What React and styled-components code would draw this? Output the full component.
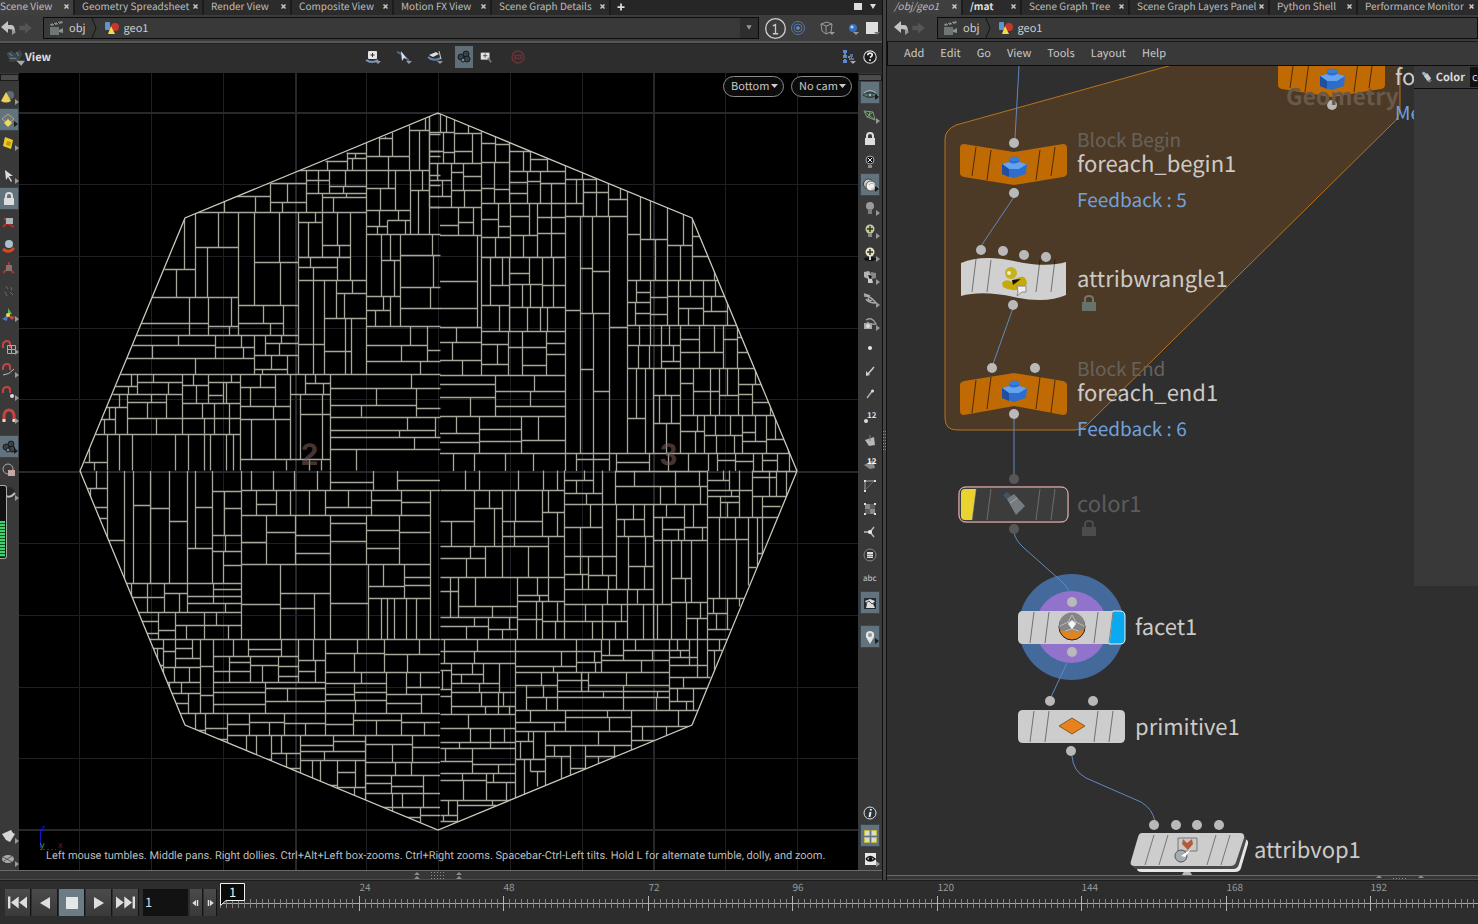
import { Fragment } from 'react';
import styled, { createGlobalStyle } from 'styled-components';

const GlobalStyle = createGlobalStyle`
  * {
    box-sizing: border-box;
  }

  body {
    margin: 0;
    background-color: #2d2d2d;
    color: #c8c8c8;
    font-family: 'Noto Sans CJK SC', 'Noto Sans', sans-serif;
    font-size: 10px;
    text-rendering: geometricPrecision;
    overflow: hidden;
  }

  button,
  input,
  select {
    font: inherit;
    color: inherit;
    margin: 0;
    padding: 0;
    border: 0;
    background: none;
    text-rendering: inherit;
  }
`;

const Desktop = styled.div`
  display: flex;
  flex-direction: column;
  height: 100vh;
`;

const Panes = styled.main`
  display: grid;
  grid-template-columns: 882fr 5px 591fr;
  flex: 1;
  min-height: 0;
`;

const Pane = styled.section`
  display: flex;
  flex-direction: column;
  min-width: 0;
  min-height: 0;
  overflow: hidden;
`;

const TabBar = styled.nav`
  display: flex;
  align-items: center;
  height: 15px;
  background-color: #262626;
  overflow: hidden;
`;

const Tab = styled.div`
  display: flex;
  flex: 0 0 ${({ $width }) => $width}px;
  align-items: center;
  justify-content: space-between;
  height: 15px;
  padding: 0 3px 3px ${({ $first }) => ($first ? 0 : 7)}px;
  border-right: 2px solid #1c1c1c;
  background-color: ${({ $active }) => ($active ? '#3f3f3f' : '#2b2b2b')};
`;

const TabLabel = styled.button`
  line-height: 12px;
  white-space: nowrap;
  font-weight: ${({ $bold }) => ($bold ? 700 : 400)};
  font-style: ${({ $italic }) => ($italic ? 'italic' : 'normal')};
  color: ${({ $bold }) => ($bold ? '#e0e0e0' : '#bdbdbd')};
`;

const TabClose = styled.button`
  display: flex;
  width: 8px;
  height: 12px;
  align-items: center;
  justify-content: center;
`;

const TabAdd = styled.button`
  width: 20px;
  height: 15px;
`;

const TabTools = styled.div`
  display: flex;
  gap: 8px;
  margin-left: auto;
  padding-right: 4px;
`;

const PathBar = styled.div`
  display: flex;
  align-items: center;
  height: 26px;
  padding: 0 ${({ $right }) => $right}px 0 0;
  background-color: #3d3d3d;
`;

const NavArrows = styled.div`
  display: flex;
  width: ${({ $width }) => $width}px;
  padding-left: ${({ $indent }) => $indent}px;
`;

const PathField = styled.div`
  display: flex;
  flex: 1;
  align-items: center;
  height: 22px;
  border: 1px solid #0c0c0c;
  background-color: #393939;
`;

const Crumb = styled.button`
  display: flex;
  align-items: center;
  gap: 4px;
  height: 20px;
  padding: 0 0 1px 5px;
  font-size: 11px;
  color: #cfcfcf;
`;

const PathMenu = styled.button`
  width: 18px;
  height: 20px;
  margin-left: auto;
  background-color: #2d2d2d;
`;

const PathTools = styled.div`
  display: flex;
  align-items: center;
  gap: 1px;
  padding-left: 5px;
`;

const IconButton = styled.button`
  display: flex;
  flex: 0 0 auto;
  align-items: center;
  justify-content: center;
  width: ${({ $width }) => $width || 22}px;
  height: 22px;
  background-color: ${({ $active }) => ($active ? '#5f6f7a' : 'transparent')};
`;

const ViewBar = styled.div`
  display: flex;
  align-items: center;
  height: 32px;
  padding: 0 1px 2px 5px;
  border-top: 2px solid #555;
  box-shadow: inset 0 1px 0 #222;
  background-color: #2d2d2d;
`;

const ViewTitle = styled.h1`
  flex: 12;
  margin: 0;
  font-size: 11px;
  line-height: 16px;
  color: #e0e0e0;
`;

const ViewTools = styled.div`
  display: flex;
  flex: 0 0 auto;
  align-items: center;
  gap: ${({ $gap }) => $gap || 0}px;
`;

const ViewSpacer = styled.div`
  flex: 11;
`;

const Stage = styled.div`
  display: flex;
  flex: 1;
  min-height: 0;
`;

const ToolStrip = styled.aside`
  display: flex;
  position: relative;
  flex: 0 0 ${({ $width }) => $width}px;
  flex-direction: column;
  align-items: ${({ $align }) => $align || 'center'};
  overflow: hidden;
  background-color: #393939;
`;

const StripHandle = styled.div`
  flex: 0 0 ${({ $height }) => $height}px;
  width: 100%;
  margin: 1px 0 ${({ $after }) => $after}px;
  border: 1px solid #1c1c1c;
  background-color: #4b4b4b;
`;

const StripGap = styled.div`
  flex: 0 0 ${({ $size }) => $size}px;
`;

const StripFill = styled.div`
  flex: 1;
`;

const StripButton = styled.button`
  display: flex;
  position: relative;
  flex: 0 0 23px;
  align-items: center;
  justify-content: center;
  width: 20px;
  border: ${({ $active }) => ($active ? '1px solid #3a464d' : 0)};
  background-color: ${({ $active }) => ($active ? '#62737d' : 'transparent')};
`;

const Flyout = styled.i`
  position: absolute;
  right: 0;
  bottom: 3px;
  border: 3px solid transparent;
  border-right: 0;
  border-left: 4px solid ${({ $dark }) => ($dark ? '#1b1b1b' : '#999')};
`;

const Meter = styled.div`
  position: absolute;
  left: 0;
  top: 412px;
  width: 7px;
  height: 74px;
  border: 1px solid #aaa;
  border-left: 0;
  border-radius: 0 3px 3px 0;
  background: repeating-linear-gradient(#45d070 0 2px, #0c5522 2px 3px) 0 35px / 5px 36px
    no-repeat #111;
`;

const Viewport = styled.div`
  position: relative;
  flex: 1;
  min-width: 0;
  background-color: #000;
`;

const ViewportArt = styled.svg`
  display: block;
  width: 100%;
  height: 100%;
`;

const CameraMenus = styled.div`
  display: flex;
  position: absolute;
  top: 3px;
  right: 6px;
  gap: 7px;
`;

const CameraMenu = styled.label`
  display: flex;
  align-items: center;
  justify-content: space-between;
  width: 61px;
  height: 21px;
  padding: 0 5px 1px 7px;
  border: 1px solid #8c8c8c;
  border-radius: 11px;
  background-color: #0c0c0c;
`;

const CameraSelect = styled.select`
  appearance: none;
  width: 40px;
  height: 18px;
  font-size: 11px;
  line-height: 18px;
  color: #c8c8c8;
`;

const HelpText = styled.p`
  position: absolute;
  left: 27px;
  bottom: 5px;
  margin: 0;
  font-family: Roboto, sans-serif;
  font-size: 11px;
  line-height: 18px;
  white-space: nowrap;
  color: #bcbcbc;
`;

const RowSplitter = styled.div`
  display: flex;
  align-items: center;
  justify-content: ${({ $end }) => ($end ? 'flex-end' : 'center')};
  height: ${({ $height }) => $height}px;
  padding-right: ${({ $end }) => $end || 6}px;
  border-top: 1px solid #6a6a6a;
  border-bottom: 1px solid #4c4c4c;
  background-color: #363636;
  overflow: hidden;
`;

const ColumnSplitter = styled.div`
  display: flex;
  align-items: center;
  border-left: 1px solid #101010;
  border-right: 1px solid #101010;
  background-color: #424242;
`;

const MenuBar = styled.nav`
  display: flex;
  align-items: center;
  gap: 16px;
  height: 25px;
  padding: 0 0 1px 16px;
  border-top: 1px solid #161616;
  border-bottom: 1px solid #0c0c0c;
  border-left: 1px solid #0c0c0c;
  background-color: #393939;
`;

const MenuItem = styled.button`
  font-size: 11px;
  line-height: 18px;
  color: #cacaca;
`;

const Network = styled.div`
  position: relative;
  flex: 1;
  min-height: 0;
  overflow: hidden;
  background-color: #2f2f2f;
`;

const Wires = styled.svg`
  position: absolute;
  left: 0;
  top: 0;
`;

const NodeBox = styled.div`
  position: absolute;
  left: ${({ $x }) => $x - 887}px;
  top: ${({ $y }) => $y - 66}px;
`;

const NodeArt = styled.svg`
  display: block;
  overflow: visible;
`;

const NodeLabels = styled.div`
  display: flex;
  position: absolute;
  left: ${({ $left }) => $left || 117}px;
  top: ${({ $top }) => $top}px;
  flex-direction: column;
  white-space: nowrap;
`;

const NodeKind = styled.span`
  font-size: 19px;
  line-height: 22px;
  color: #66625c;
`;

const NodeName = styled.span`
  font-size: 22px;
  line-height: 24px;
  color: ${({ $dim }) => ($dim ? '#5c5c5c' : '#cdcac6')};
`;

const NodeNote = styled.span`
  margin-top: 12px;
  font-size: 19px;
  line-height: 26px;
  color: #73a0da;
`;

const LockMark = styled.svg`
  margin-top: 4px;
`;

const Watermark = styled.div`
  position: absolute;
  left: 399px;
  top: 15px;
  font-size: 23px;
  font-weight: 700;
  line-height: 28px;
  color: #69594a;
`;

const ParmPanel = styled.aside`
  position: absolute;
  top: 0;
  right: 0;
  width: 64px;
  height: 520px;
  background-color: #393939;
`;

const ParmHeader = styled.label`
  display: flex;
  align-items: center;
  gap: 3px;
  height: 23px;
  padding-left: 6px;
  border-bottom: 1px solid #0c0c0c;
  font-size: 11px;
  font-weight: 700;
  color: #dcdcdc;
`;

const ParmInput = styled.input`
  flex: 1;
  width: 8px;
  height: 20px;
  margin-left: 2px;
  padding-left: 2px;
  background-color: #121212;
  font-weight: 400;
`;

const Playbar = styled.footer`
  display: flex;
  height: 44px;
  padding-left: 5px;
  border-top: 1px solid #1c1c1c;
  background-color: #2d2d2d;
`;

const Transport = styled.div`
  display: flex;
  gap: 1px;
  padding: 8px ${({ $after }) => $after}px 0 0;
`;

const PlayButton = styled.button`
  display: flex;
  align-items: center;
  justify-content: center;
  width: ${({ $small }) => ($small ? 13 : 26)}px;
  height: 27px;
  border-right: 1px solid #151515;
  background: ${({ $active }) =>
    $active ? '#6b7c86' : 'linear-gradient(#4b4b4b, #393939)'};
`;

const FrameInput = styled.input`
  width: 45px;
  height: 27px;
  margin: 8px 2px 0 0;
  padding: 0 0 2px 2px;
  background-color: #121212;
  font-size: 13px;
  color: #dcdcdc;
`;

const Ruler = styled.svg`
  flex: 1;
  min-width: 0;
  height: 43px;
`;

// Segments are [x, from, to] and [y, from, to], three units to a screen pixel.
const NORTH_WEST = {
  x: 80,
  y: 100,
  v: `1035 55 92;988 75 212;1017 93 212;1048 50 404;936 97 170;897 113 170;917 108 116;858 128 823;803 158 212;825 160 175;818 176 212;742 182 212;924 170 212;
678 212 337;714 212 242;748 212 280;796 212 260;790 260 280;716 242 280;726 280 337;760 293 337;800 280 293;572 250 337;623 250 307;608 307 337;526 292 337;434 305 337;
924 212 266;946 212 332;991 212 404;1027 212 270;901 266 332;1015 270 404;897 332 378;955 332 360;976 360 404;893 378 404;922 360 404;
313 355 507;345 337 593;415 337 441;474 337 705;290 507 593;381 441 593;522 337 617;599 337 487;601 487 617;654 337 823;329 593 705;386 593 705;455 593 679;449 679 705;
550 617 670;611 617 705;571 670 705;294 705 736;405 705 776;484 705 741;217 736 776;491 741 776;346 776 823;522 705 823;556 705 765;605 705 731;598 731 765;575 765 808;623 765 823;546 808 823;
705 337 368;726 337 472;685 368 472;773 337 436;811 337 540;778 436 472;691 472 503;773 472 540;700 503 540;701 540 823;734 540 823;768 540 656;818 540 580;794 580 656;797 656 823;815 656 823;
903 404 590;930 404 482;944 482 590;960 404 680;1056 404 466;1060 466 562;1052 562 624;911 590 632;931 590 680;887 632 680;990 680 735;1043 680 785;964 735 785;1022 785 823;
155 824 858;171 824 882;221 824 846;308 824 1003;266 846 882;146 858 882;340 824 855;386 824 910;455 824 846;481 824 1110;350 855 910;429 846 910;440 846 910;119 882 922;143 882 1003;215 882 908;260 882 955;203 908 955;228 955 1003;368 910 955;404 910 1003;447 910 1003;373 955 1003;88 922 958;107 922 1003;73 958 1003;
29 1045 1088;82 1003 1110;118 1003 1110;157 1003 1110;286 1003 1110;325 1003 1110;373 1003 1110;391 1003 1110;440 1003 1110;460 1003 1110;43 1088 1110;
541 824 862;585 824 920;512 862 920;632 824 1080;676 824 882;705 824 850;750 824 1110;731 850 882;579 920 957;515 957 1078;585 957 1078;661 882 1078;728 882 1078;
994 824 865;888 865 917;1009 865 950;844 917 950;983 952 990;1065 952 1012;958 990 1012;1003 1012 1049;830 1049 1110;620 1080 1110;687 1080 1110;723 1080 1110`,
  h: `92 988 1048;116 897 936;170 858 988;212 640 1048;160 800 858;175 803 858;184 735 803;242 678 748;260 748 858;280 678 858;293 726 858;250 572 678;307 572 678;290 470 572;337 345 858;
266 858 946;270 991 1048;332 858 991;360 922 991;378 858 922;404 858 1080;103 1048 1080;154 1048 1080;170 1048 1080;226 1048 1080;256 1048 1080;322 1048 1080;
441 345 474;507 252 345;593 215 474;487 522 654;617 474 654;671 185 386;679 386 474;705 170 654;670 474 611;736 157 405;741 405 522;776 138 522;731 556 654;765 522 654;808 522 623;824 120 1080;
368 654 726;436 726 811;472 654 811;503 654 773;540 654 858;580 768 858;656 734 858;755 734 815;733 654 734;466 960 1080;482 903 960;562 960 1080;590 858 960;624 960 1080;632 858 931;680 858 1080;735 858 1043;750 1043 1080;785 858 1080;
846 171 308;855 308 386;846 386 481;858 105 171;882 97 308;887 386 428;910 308 481;908 143 260;922 78 143;955 143 481;958 65 107;1003 45 481;1088 12 82;
862 481 585;920 481 632;957 481 632;850 676 750;882 632 750;944 661 750;1079 481 750;865 750 1080;917 750 1009;924 1009 1080;952 750 1080;990 750 1065;1012 750 1080;1049 750 1080`,
};

const SOUTH_EAST = {
  x: 440,
  y: 470,
  v: `75 0 62;118 0 62;235 0 62;311 0 62;352 0 62;102 62 228;148 62 116;187 62 322;227 62 155;326 62 127;306 62 199;33 155 228;163 116 228;352 127 199;223 155 230;90 230 265;136 230 322;78 265 322;265 230 322;324 199 395;
31 322 443;54 322 443;106 322 409;156 409 443;232 322 507;292 322 375;297 375 395;290 395 507;308 395 507;352 397 455;345 455 507;373 0 507;102 443 470;145 443 507;207 443 477;78 470 507;186 477 507;
433 0 32;460 0 70;410 32 70;488 0 260;440 70 102;527 0 102;583 0 50;707 0 102;779 0 50;660 50 102;780 50 102;803 0 622;
451 102 172;420 172 260;529 102 358;579 102 148;614 102 199;552 148 199;641 102 507;564 199 358;616 199 290;614 290 358;422 260 312;487 260 316;427 312 358;445 260 358;505 316 358;
680 102 140;733 102 210;759 102 172;667 140 210;715 178 210;787 172 210;501 358 404;561 358 507;591 358 401;437 404 455;487 404 507;544 404 455;458 455 507;525 455 507;610 404 507;
667 210 404;695 210 507;725 210 325;754 210 397;737 325 397;653 404 507;739 397 507;782 397 445;772 445 507;
851 0 30;868 0 62;898 0 142;875 62 80;842 80 142;863 97 142;938 0 142;988 0 22;1010 0 80;989 22 80;968 80 142;1040 0 80;
838 142 385;886 142 207;889 207 385;926 142 345;951 142 293;968 142 250;820 385 430;861 385 478;830 430 478;897 385 410;838 507 540;822 540 600;
14 507 580;112 507 543;104 543 580;227 507 985;33 580 733;98 580 612;130 580 640;177 580 667;63 612 640;118 640 667;124 667 710;175 667 733;191 667 707;137 710 733;207 707 733;8 600 658;
86 733 775;91 775 818;151 775 834;194 775 818;59 818 834;15 834 875;98 834 910;175 883 910;67 910 930;139 910 990;160 910 937;71 930 990;198 937 990;25 990 1035;53 990 1055;158 990 1005;10 1035 1055;
409 507 608;363 545 590;341 590 608;484 507 608;508 507 555;549 507 572;463 545 577;467 577 608;585 507 541;637 541 572;605 572 608;689 507 720;711 507 540;747 507 585;720 540 562;772 507 622;
303 608 645;352 608 720;423 608 665;445 608 665;558 608 647;310 645 683;259 645 720;320 683 720;549 647 720;490 667 683;652 665 683;650 683 720;729 622 652;760 655 720;711 655 693;740 693 720;
271 720 757;377 720 785;343 757 785;501 720 743;507 743 785;574 720 840;715 720 770;606 770 810;680 770 795;474 785 823;242 813 865;265 785 813;281 785 867;317 785 945;343 825 860;390 825 915;437 825 895;363 860 925;253 867 975;271 867 905;293 905 950;523 825 860;476 860 880`,
  h: `62 0 373;116 102 187;127 306 373;155 0 102;155 187 306;199 187 373;230 0 325;265 0 136;322 0 373;365 0 54;409 54 232;443 0 232;375 232 325;395 232 373;448 232 308;455 308 373;470 0 145;477 145 232;507 0 862;
32 373 460;70 373 488;102 373 803;50 527 803;4 527 803;172 373 488;148 529 614;199 529 641;290 564 641;260 373 529;312 373 445;316 445 529;358 373 641;142 641 733;178 667 733;172 733 803;210 641 803;404 373 694;455 373 561;325 695 754;397 695 803;445 739 803;
30 803 868;62 803 938;80 803 898;97 842 898;4 938 1070;22 938 1010;80 938 1040;110 968 1020;142 803 1015;207 838 926;385 803 912;293 926 950;430 803 861;478 803 870;250 951 968;540 803 848;
543 0 227;580 0 227;600 0 33;612 33 130;640 33 177;667 33 227;658 0 33;680 0 33;710 33 227;733 0 227;775 0 227;818 0 227;834 0 227;875 0 98;883 98 227;910 0 227;930 0 139;937 139 227;990 0 215;1005 53 170;1035 0 53;1055 0 53;
545 227 484;590 227 409;577 409 484;555 484 549;541 549 689;572 484 689;608 227 689;541 689 747;562 689 772;585 689 803;622 689 810;645 227 352;632 352 445;647 445 689;665 352 689;683 259 689;655 689 803;693 689 760;720 227 775;
757 227 377;743 377 574;785 227 574;770 574 745;810 574 640;825 317 574;813 227 281;867 227 317;905 271 317;860 317 390;895 390 437;860 437 530`,
};

const CENTER_X = 440;
const CENTER_Y = 471;

// Blocks of the remaining quadrants: [left, top, right, bottom, lean, cell size].
// A lean above 1 gives wide cells, below 1 tall ones.
const BLOCKS = [
  [429, 113, 454, 163, 0.6, 14],
  [454, 113, 481, 163, 0.8, 15],
  [429, 163, 481, 207, 1, 14],
  [440, 207, 481, 235, 0.7, 16],
  [481, 125, 509, 203, 0.5, 18],
  [509, 140, 565, 203, 0.9, 15],
  [481, 203, 537, 257, 0.8, 16],
  [537, 203, 565, 257, 0.7, 16],
  [440, 235, 477, 281, 1, 34],
  [440, 281, 477, 327, 1, 26],
  [477, 235, 481, 327, 0.5, 30],
  [481, 257, 509, 331, 0.5, 18],
  [509, 257, 565, 331, 0.8, 17],
  [440, 327, 481, 375, 1.6, 19],
  [481, 331, 565, 375, 0.9, 17],
  [565, 160, 596, 216, 0.7, 16],
  [596, 175, 627, 216, 0.7, 15],
  [565, 216, 580, 453, 0.12, 44],
  [580, 216, 609, 313, 0.25, 26],
  [580, 313, 609, 453, 0.2, 32],
  [609, 216, 627, 453, 0.1, 42],
  [627, 188, 640, 280, 0.3, 24],
  [640, 195, 667, 280, 0.4, 24],
  [667, 203, 692, 280, 0.4, 24],
  [627, 280, 667, 325, 0.8, 14],
  [667, 280, 727, 325, 1.2, 15],
  [692, 216, 727, 280, 0.6, 20],
  [627, 325, 680, 368, 0.9, 14],
  [680, 325, 765, 368, 0.8, 18],
  [627, 368, 653, 453, 0.3, 22],
  [653, 368, 680, 453, 0.5, 17],
  [680, 368, 719, 415, 0.8, 19],
  [719, 368, 770, 415, 0.7, 17],
  [680, 415, 742, 453, 1, 16],
  [742, 415, 800, 453, 0.7, 15],
  [440, 375, 565, 416, 2.8, 24],
  [440, 416, 479, 453, 2, 18],
  [479, 416, 565, 453, 1.8, 21],
  [440, 453, 565, 471, 1, 20],
  [565, 453, 616, 471, 1, 12],
  [616, 453, 708, 471, 2, 17],
  [708, 453, 800, 471, 1, 13],
  [80, 471, 107, 548, 0.6, 15],
  [107, 471, 133, 583, 0.2, 28],
  [133, 471, 187, 583, 0.2, 34],
  [187, 471, 212, 583, 0.25, 26],
  [212, 471, 241, 535, 0.6, 20],
  [212, 535, 241, 583, 0.7, 16],
  [241, 471, 330, 490, 1, 18],
  [330, 471, 440, 490, 2.4, 22],
  [241, 490, 325, 515, 1, 18],
  [325, 490, 430, 515, 2, 19],
  [241, 515, 295, 564, 0.9, 26],
  [295, 515, 366, 564, 1.4, 24],
  [366, 515, 430, 564, 1, 26],
  [241, 564, 280, 639, 0.9, 34],
  [280, 564, 368, 639, 1, 32],
  [368, 564, 430, 598, 1.4, 19],
  [368, 598, 430, 639, 0.4, 20],
  [430, 490, 440, 639, 0.8, 36],
  [120, 583, 187, 612, 0.9, 14],
  [187, 583, 241, 612, 2, 16],
  [120, 612, 241, 639, 1.6, 16],
  [145, 639, 200, 682, 1, 14],
  [200, 639, 213, 713, 0.6, 17],
  [150, 682, 200, 713, 1.4, 14],
  [213, 639, 298, 656, 2, 16],
  [213, 656, 298, 682, 1.4, 14],
  [213, 682, 325, 713, 3.2, 22],
  [298, 639, 325, 682, 0.8, 15],
  [325, 639, 440, 672, 2.4, 20],
  [325, 672, 440, 713, 2.2, 18],
  [180, 713, 227, 760, 1, 15],
  [227, 713, 325, 735, 2.2, 17],
  [227, 735, 300, 790, 0.6, 18],
  [300, 735, 365, 760, 2.8, 17],
  [325, 713, 440, 735, 2.2, 17],
  [365, 735, 440, 775, 2.6, 19],
  [300, 760, 365, 810, 0.7, 17],
  [365, 775, 440, 830, 1.8, 16],
];

const createRandom = (seed) => {
  let state = seed;
  return () => {
    state = (state * 16807) % 2147483647;
    return state / 2147483647;
  };
};

const subdivide = (left, top, right, bottom, lean, size, random) => {
  const width = right - left;
  const height = bottom - top;
  const ratio = 0.3 + random() * 0.4;
  if (width * height < size * size * 1.5 || Math.max(width, height) < 10) return '';
  if (width > height * lean) {
    const x = Math.round(left + width * ratio);
    return (
      `M${x}.5 ${top}V${bottom}` +
      subdivide(left, top, x, bottom, lean, size, random) +
      subdivide(x, top, right, bottom, lean, size, random)
    );
  }
  const y = Math.round(top + height * ratio);
  return (
    `M${left} ${y}.5H${right}` +
    subdivide(left, top, right, y, lean, size, random) +
    subdivide(left, y, right, bottom, lean, size, random)
  );
};

// Cells run on across the two centre lines, so no edge is drawn there.
const blockEdges = (left, top, right, bottom) => {
  const columns = [left, right].filter((x) => x !== CENTER_X);
  const rows = [top, bottom].filter((y) => y !== CENTER_Y);
  return (
    columns.map((x) => `M${x}.5 ${top}V${bottom}`).join('') +
    rows.map((y) => `M${left} ${y}.5H${right}`).join('')
  );
};

const blockPath = BLOCKS.map(([left, top, right, bottom, lean, size], i) => {
  const random = createRandom(7919 * (i + 3));
  return (
    blockEdges(left, top, right, bottom) +
    subdivide(left, top, right, bottom, lean, size, random)
  );
}).join('');

const readSegments = (text) =>
  text.split(';').map((part) => part.trim().split(' ').map(Number));

const px = (origin, value) => origin + Math.floor(value / 3) + 0.5;

const quadPath = ({ x, y, v, h }) => {
  const down = readSegments(v).map(
    ([at, from, to]) => `M${px(x, at)} ${px(y, from)}V${px(y, to)}`
  );
  const across = readSegments(h).map(
    ([at, from, to]) => `M${px(x, from)} ${px(y, at)}H${px(x, to)}`
  );
  return down.concat(across).join('');
};

const OCTAGON = '438,113 692,218 797,471 692,725 438,830 185,725 80,471 185,218';
const GRID_X = [79, 151, 223, 295, 366, 438, 510, 582, 653, 725, 797];
const GRID_Y = [112, 184, 256, 328, 399, 471, 543, 615, 687, 758, 829];

const MeshView = () => (
  <ViewportArt viewBox="19 73 839 797" preserveAspectRatio="xMidYMid slice">
    <defs>
      <clipPath id="outline">
        <polygon points={OCTAGON} />
      </clipPath>
    </defs>
    {GRID_X.map((x, i) => (
      <rect
        key={x}
        x={x}
        y="0"
        width={i % 5 === 3 ? 2 : 1}
        height="1000"
        fill={i % 5 === 3 ? '#28282c' : '#202024'}
      />
    ))}
    {GRID_Y.map((y, i) => (
      <rect
        key={y}
        x="0"
        y={y}
        width="1000"
        height={i % 5 === 0 ? 2 : 1}
        fill={i % 5 === 0 ? '#28282c' : '#202024'}
      />
    ))}
    <g clipPath="url(#outline)" stroke="#a6a69a" strokeWidth="1.300" fill="none">
      <path d={quadPath(NORTH_WEST)} />
      <path d={quadPath(SOUTH_EAST)} />
      <path d={blockPath} />
    </g>
    <polygon points={OCTAGON} fill="none" stroke="#c9c9bb" strokeWidth="1.300" />
    <g fill="#80605a" opacity="0.55" fontFamily="Liberation Sans" fontWeight="700" fontSize="31">
      <text x="301" y="465">2</text>
      <text x="660" y="465">3</text>
    </g>
    <g fontFamily="Liberation Sans" fontSize="9">
      <path d="M40.500 830V848" stroke="#1515c8" />
      <path d="M43 849.500H56" stroke="#8c1010" strokeDasharray="2 2" />
      <text x="41" y="831" fill="#1818d0">z</text>
      <text x="40" y="848" fill="#30b030">y</text>
      <text x="58" y="848" fill="#8c1010">x</text>
    </g>
  </ViewportArt>
);

const icons = {
  back: (
    <>
      <path d="M1 8 8 2v4h4q3 1 3 7-2-3-7-3v4z" fill="#c4c4c4" />
      <path d="M12 10v6l4-3z" fill="#999" />
    </>
  ),
  forward: <path d="M14 8 8 3v3H3v4h5v3z" fill="#555" />,
  obj: (
    <>
      <path d="m1 4 12-3 1 2L2 6z" fill="#858b88" />
      <path d="m4 3 2 2M8 2l2 2" stroke="#222" />
      <path d="M1 7h9v8H1z" fill="#6f7774" />
      <path d="m10 10 4-2v5l-4-1z" fill="#8b9390" />
    </>
  ),
  geo: (
    <>
      <rect x="1" y="2" width="5" height="8" rx="1" fill="#5f94cf" />
      <circle cx="11" cy="7" r="4" fill="#c8372c" />
      <path d="m7 6 4 8H4z" fill="#f2dc4b" />
    </>
  ),
  one: (
    <>
      <circle cx="8" cy="8" r="7.500" fill="none" stroke="#cfcfcf" />
      <path d="M6 6l2-1v7M6 12h4" fill="none" stroke="#ccc" />
    </>
  ),
  target: (
    <g fill="none" stroke="#5377ad">
      <circle cx="8" cy="8" r="6.500" />
      <circle cx="8" cy="8" r="4" />
      <circle cx="8" cy="8" r="1.500" fill="#7d9cca" />
    </g>
  ),
  cube: (
    <>
      <path d="m2 4 6-2 5 2-1 8-5 2-4-3zM2 4l5 2 6-2M7 6v8" fill="none" stroke="#999" />
      <path d="M10 12h6l-3 3z" fill="#999" />
    </>
  ),
  sphere: (
    <>
      <circle cx="8" cy="8" r="4" fill="#386fc0" />
      <circle cx="7" cy="7" r="1.500" fill="#b9d2f3" />
      <path d="M8 12h6l-3 3z" fill="#999" />
    </>
  ),
  square: (
    <>
      <path d="M2 2h12v12H2z" fill="#dedede" />
      <path d="M10 12h6l-3 3z" fill="#777" />
    </>
  ),
  camera: (
    <>
      <path d="m1 5 4-2 3 2 4-3 2 4-3 5-7 1z" fill="#3b464c" />
      <path d="m3 5 3 2m3-3 2 3M4 9h5" stroke="#6c7b83" />
      <path d="M9 11h7l-3 4z" fill="#aaa" />
    </>
  ),
  pose: (
    <>
      <rect x="3" y="2" width="9" height="8" rx="1" fill="#e5e5e5" />
      <path d="M7.500 4v4M5.500 6h4" stroke="#333" />
      <path d="M1 11q6 4 12 0" fill="none" stroke="#7795be" strokeWidth="2" />
      <path d="M10 12h6l-3 3z" fill="#999" />
    </>
  ),
  select: (
    <>
      <path d="M1 3q5 1 12 9" fill="none" stroke="#416a9c" strokeWidth="2" />
      <path d="m5 2 1 10 2-3 3 1z" fill="#ddd" />
      <path d="M10 12h6l-3 3z" fill="#999" />
    </>
  ),
  brush: (
    <>
      <path d="m2 6 7-3 3 2-6 3z" fill="#ddd" />
      <path d="M1 8q5 5 13 1" fill="none" stroke="#5f84b4" strokeWidth="2" />
      <path d="m12 2 2 8" stroke="#ccc" />
      <path d="M10 12h6l-3 3z" fill="#999" />
    </>
  ),
  rocks: (
    <g fill="#394347" stroke="#151b1e">
      <circle cx="5" cy="8" r="3" />
      <circle cx="10" cy="5" r="3" />
      <circle cx="11" cy="10" r="3" />
      <circle cx="7" cy="11" r="2" fill="#78868d" />
    </g>
  ),
  zoomBox: (
    <>
      <path d="M2 3h10v8H2z" fill="#e2e2e2" />
      <path d="M7 4v5M4.500 6.500h5" stroke="#36506d" />
      <path d="m10 9 4 5" stroke="#777" strokeWidth="2" />
    </>
  ),
  blocked: (
    <g fill="none" stroke="#6b3335" strokeWidth="1.500">
      <circle cx="8" cy="8" r="6" />
      <path d="M5 6.500h6v3H5z" />
    </g>
  ),
  graph: (
    <>
      <path d="M5 4v9M5 8h7" stroke="#ddd" strokeDasharray="2 1" />
      <path d="M3 1h4v3H3zM3 6h4v3H3zM3 11h4v3H3z" fill="#5d88d1" />
      <path d="M10 5h3v3h-3zM9 9h5v2H9z" fill="#5c6f94" />
      <path d="M10 12h6l-3 3z" fill="#aaa" />
    </>
  ),
  help: (
    <>
      <circle cx="8" cy="8" r="5.500" fill="#1b1b1b" stroke="#d8d8d8" />
      <path d="M6 6.500q0-2 2-2t2 1.700q0 1-2 2.300M8 10v1.500" fill="none" stroke="#eee" strokeWidth="1.500" />
    </>
  ),
  plane: (
    <>
      <path d="M1 10q7-6 14 0-7 5-14 0zM4 8l8 4M12 8l-8 4" fill="none" stroke="#263f38" />
      <path d="M2 8q6-5 12 0" fill="none" stroke="#a9b6b4" />
      <circle cx="8" cy="10" r="2" fill="#9fb0aa" stroke="#263f38" />
    </>
  ),
  leaf: (
    <path d="m2 3 9 1 2 8-8-3zM2 3l11 9M5 9l6-5M8 3l-1 7" fill="none" stroke="#76a070" />
  ),
  lock: (
    <>
      <path d="M5 8V5q0-3 3-3t3 3v3" fill="none" stroke="#ddd" strokeWidth="2" />
      <path d="M3 7h10v7H3z" fill="#ddd" />
    </>
  ),
  bulbOff: (
    <>
      <circle cx="8" cy="6" r="4" fill="#111" stroke="#aaa" />
      <path d="m6 4 4 4m0-4L6 8" stroke="#eee" />
      <path d="M6 11h4v3H6z" fill="#888" />
    </>
  ),
  ball: (
    <>
      <circle cx="6.500" cy="7" r="5" fill="#ccc" stroke="#333" />
      <circle cx="9" cy="9" r="5" fill="#f0f0f0" stroke="#555" />
      <path d="M7 8a3 3 0 1 1 2 4" fill="none" stroke="#aaa" />
    </>
  ),
  bulb: (
    <>
      <circle cx="8" cy="6" r="4" fill="#9b9b9b" />
      <path d="M6 9h4v5H6z" fill="#7d7d7d" />
    </>
  ),
  bulbAdd: (
    <>
      <circle cx="8" cy="6" r="4.500" fill="#c3ca9c" />
      <path d="M8 3v6M5 6h6" stroke="#2d3820" strokeWidth="1.500" />
      <path d="M6 10h4v4H6z" fill="#888" />
    </>
  ),
  bulbGround: (
    <>
      <ellipse cx="8" cy="13" rx="6" ry="2" fill="#111" />
      <circle cx="8" cy="6" r="4.500" fill="#e7e5bd" />
      <path d="M8 3v6M5 6h6" stroke="#333" strokeWidth="1.500" />
      <path d="M7 10h2v4H7z" fill="#ccc" />
    </>
  ),
  shapes: (
    <>
      <path d="m2 3 5-1 2 4-3 4-4-2z" fill="#b3b3b3" />
      <path d="m9 3 5 1v5l-4 1-2-4z" fill="#888" />
      <path d="m6 9 4 1 1 4H6z" fill="#ccc" />
      <path d="m6 6 4 1-2 3z" fill="#111" />
    </>
  ),
  eyeHalf: (
    <path d="M2 4q6-1 12 7-8 0-10-4M6 6q1 4 4 2M2 2l6 2" fill="none" stroke="#aaa" strokeWidth="1.500" />
  ),
  camEye: (
    <>
      <path d="M2 8h8v6H2z" fill="#aaa" />
      <path d="M4 5q6-4 10 4-6 1-9-2" fill="none" stroke="#999" strokeWidth="1.500" />
      <circle cx="6" cy="11" r="2" fill="#ddd" />
    </>
  ),
  dot: <circle cx="8" cy="8" r="2" fill="#e8e8e8" />,
  arrowIn: (
    <>
      <path d="m12 4-6 7" stroke="#ccc" strokeWidth="1.500" />
      <path d="m4 8 4 4-4 1z" fill="#ccc" />
    </>
  ),
  arrowOut: (
    <>
      <path d="m5 12 6-8" stroke="#aaa" strokeWidth="1.500" />
      <circle cx="10.500" cy="5" r="1.500" fill="#ddd" />
    </>
  ),
  pointNum: (
    <>
      <circle cx="4" cy="12" r="2" fill="#ddd" />
      <text x="5" y="9" fontSize="8" fontWeight="700" fill="#ddd">12</text>
    </>
  ),
  prim: (
    <>
      <path d="m3 8 9-3 1 8-6 1z" fill="#b8b8b8" />
      <path d="M8 3v6" stroke="#777" />
    </>
  ),
  primNum: (
    <>
      <path d="m2 10 9-5 2 8-5 1z" fill="#8a8a8a" />
      <text x="5" y="9" fontSize="8" fontWeight="700" fill="#fff">12</text>
    </>
  ),
  corner: (
    <>
      <path d="M3 13V3h10" fill="none" stroke="#aaa" />
      <path d="m3 12 8-8" stroke="#666" />
      <path d="M2 2h2v2H2zM12 2h2v2h-2zM2 12h2v2H2z" fill="#ddd" />
    </>
  ),
  checker: (
    <>
      <path d="M3 3h5v5H3zM8 8h5v5H8z" fill="#888" />
      <path d="M8 3h5v5H8zM3 8h5v5H3z" fill="#5c5c5c" />
      <path d="M2 2h2v2H2zM12 2h2v2h-2zM2 12h2v2H2zM12 12h2v2h-2z" fill="#ddd" />
    </>
  ),
  tripod: (
    <>
      <path d="M2 8h6l4-5M8 8l4 5" fill="none" stroke="#bbb" strokeWidth="1.500" />
      <circle cx="8" cy="8" r="2" fill="#eee" />
    </>
  ),
  page: (
    <>
      <circle cx="8" cy="8" r="6" fill="#333" stroke="#888" />
      <path d="M5 5h6v6H5z" fill="#ddd" />
      <path d="M5 7.500h6M5 9.500h6" stroke="#888" />
    </>
  ),
  abc: <text x="1" y="11" fontSize="8" fill="#ccc">abc</text>,
  image: (
    <>
      <path d="M2 3h12v11H2z" fill="#222b30" />
      <path d="m3 6 5-2 5 2-2 3 2 4H4l1-4z" fill="#ddd" />
      <path d="m4 8 3-2 3 3 3-2" fill="none" stroke="#445" />
    </>
  ),
  pin: (
    <>
      <path d="M8 15 4 8q-1-6 4-6t4 6z" fill="#e4e4e4" />
      <circle cx="8" cy="6" r="2" fill="#8a979d" />
    </>
  ),
  info: (
    <>
      <circle cx="8" cy="8" r="6" fill="#28333b" stroke="#ddd" />
      <path d="m9 4-.3 1.500M8.500 7l-1 5" stroke="#eee" strokeWidth="2" />
    </>
  ),
  quad: (
    <g fill="#d9dccb" stroke="#c9b73b">
      <path d="M2.500 2.500h5v5h-5zM9.500 2.500h5v5h-5zM2.500 9.500h5v5h-5zM9.500 9.500h5v5h-5z" />
    </g>
  ),
  eye: (
    <>
      <path d="M3 2h11v12H3z" fill="#e8e8e8" />
      <path d="M4 8q4-5 9 0-5 4-9 0" fill="#fff" stroke="#111" strokeWidth="1.500" />
      <circle cx="8.500" cy="8" r="2" fill="#111" />
    </>
  ),
  cone: (
    <>
      <circle cx="9" cy="6" r="4" fill="#626b73" />
      <path d="m5 3 5 9q-5 3-10 0z" fill="#ebd35a" />
    </>
  ),
  diamond: (
    <>
      <path d="m7 2 6 5-6 5-6-5z" fill="#6d7578" stroke="#b6ab77" />
      <path d="m7 7 4 4-4 4-4-4z" fill="#f0d867" />
    </>
  ),
  box: (
    <>
      <path d="m4 2 8 3-2 9-8-3z" fill="#edcd22" />
      <path d="m6 6 4 1-1 4-4-1z" fill="#b99714" />
    </>
  ),
  arrow: <path d="m4 2 1 10 2-3 3 5 1-1-3-5h4z" fill="#ddd" />,
  move: (
    <>
      <path d="m2 13 4-4 7 4M3 4l4 4" stroke="#b82f28" strokeWidth="2" fill="none" />
      <path d="M5 4h7v6H5z" fill="#a7b6b7" />
    </>
  ),
  rotate: (
    <>
      <path d="M2 12q6 5 11-1" fill="none" stroke="#d6471d" strokeWidth="3" />
      <circle cx="8" cy="7" r="4" fill="#aebfcb" />
    </>
  ),
  scale: (
    <>
      <path d="m2 13 5-5 6 5M8 8V2" fill="none" stroke="#a83632" strokeWidth="2" />
      <path d="M5 5h6v6H5z" fill="#85706e" />
    </>
  ),
  faded: <path d="m5 3 2 3m3-2 1 3M4 9l2 4m3-4 3 3" stroke="#696969" />,
  handles: (
    <>
      <path d="M7 9V2l4 6z" fill="#57ba45" />
      <path d="m6 9 8 2-3 3z" fill="#d5483b" />
      <path d="m7 9-6 4 5 2z" fill="#4a7bc7" />
      <circle cx="7" cy="9" r="2" fill="#ecd75b" />
    </>
  ),
  magnet: (
    <>
      <path d="M3 13V7q1-5 5-5t5 5v6" fill="none" stroke="#c94440" strokeWidth="3" />
      <path d="M1.500 11h3v3h-3zM11.500 11h3v3h-3z" fill="#ddd" />
    </>
  ),
  magnetGrid: (
    <>
      <path d="M2 9V5q1-3 4-3t3 3v4" fill="none" stroke="#c94440" strokeWidth="2" />
      <path d="M6.500 6.500h8v8h-8zM10.500 6v8M6 10.500h8" fill="none" stroke="#aaa" />
    </>
  ),
  magnetCurve: (
    <>
      <path d="M2 8V5q1-3 4-3t3 3v3" fill="none" stroke="#c94440" strokeWidth="2" />
      <path d="M2 13q6 0 11-6" fill="none" stroke="#bbb" />
    </>
  ),
  magnetPoint: (
    <>
      <path d="M2 8V5q1-3 4-3t3 3v3" fill="none" stroke="#c94440" strokeWidth="2" />
      <circle cx="11" cy="11" r="2" fill="#ddd" />
    </>
  ),
  circleBox: (
    <>
      <circle cx="7" cy="7" r="5" fill="none" stroke="#aaa" />
      <path d="M7 8h7v6H7z" fill="#c6a9a2" />
    </>
  ),
  dial: (
    <>
      <circle cx="8" cy="8" r="6" fill="#24282a" />
      <path d="M2 9q6 6 12-1" fill="none" stroke="#bbb" strokeWidth="2" />
    </>
  ),
  glove: <path d="m1 6 9-4 2 3 2 1-5 8-4-2z" fill="#d6d6d6" />,
  meshBall: (
    <>
      <ellipse cx="7" cy="8" rx="6" ry="4" fill="#aaa" />
      <path d="m2 6 9 5m0-6-8 5" stroke="#555" />
    </>
  ),
  tube: (
    <>
      <path d="m2 3 3-2 4 4-3 3z" fill="#8fb2cf" />
      <path d="m5 7 4-4 5 7-4 4z" fill="#c4c9cc" />
      <path d="M9 12h6l-3 3z" fill="#888" />
    </>
  ),
  caret: <path d="M5 6h6l-3 5z" fill="#999" />,
  plus: <path d="M8 4v8M4 8h8" stroke="#ddd" strokeWidth="2" />,
  toStart: <path d="M0 3h2v10H0zM9 3v10L2.500 8zM16 3v10L9.500 8z" fill="#dedede" />,
  playBack: <path d="M13 2v12L3 8z" fill="#dedede" />,
  stop: <path d="M2 2h12v12H2z" fill="#e6e6e6" />,
  play: <path d="M3 2v12l10-6z" fill="#dedede" />,
  toEnd: <path d="M14 3h2v10h-2zM7 3v10l6.500-5zM0 3v10l6.500-5z" fill="#dedede" />,
  stepBack: <path d="M8 4v8L3 8zM9 4h2v8H9z" fill="#dedede" />,
  stepNext: <path d="M8 4v8l5-4zM5 4h2v8H5z" fill="#dedede" />,
};

const Icon = ({ name, size = 16 }) => (
  <svg width={size} height={size} viewBox="0 0 16 16" aria-hidden="true">
    {icons[name]}
  </svg>
);

const LEFT_TOOLS = [
  ['cone', 'f'], ['diamond', 'fa'], ['box', 'f'], 10,
  ['arrow', 'f'], ['lock', 'a'], ['move'], ['rotate'], ['scale'], ['faded'], ['handles', 'f'], 10,
  ['magnetGrid', 'f'], ['magnetCurve', 'f'], ['magnetPoint', 'f'], ['magnet', 'f'], 8,
  ['rocks', 'fa'], ['circleBox'], ['dial', 'f'], 'fill',
  ['glove', 'f'], ['meshBall', 'f'],
];

const RIGHT_TOOLS = [
  ['plane', 'fa'], ['leaf', 'f'], ['lock'], ['bulbOff'], ['ball', 'fa'], ['bulb', 'f'],
  ['bulbAdd', 'f'], ['bulbGround', 'f'], ['shapes', 'f'], ['eyeHalf', 'f'], ['camEye', 'f'], 2,
  ['dot'], ['arrowIn'], ['arrowOut'], ['pointNum'], ['prim'], ['primNum'], ['corner'],
  ['checker'], ['tripod'], ['page'], ['abc'], 2, ['image', 'a'], 11, ['pin', 'fa'], 'fill',
  ['info'], ['quad', 'a'], ['eye', 'f'],
];

const renderTools = (tools) =>
  tools.map((tool, i) => {
    if (tool === 'fill') return <StripFill key={i} />;
    if (typeof tool === 'number') return <StripGap key={i} $size={tool} />;
    const [name, flags = ''] = tool;
    const active = flags.includes('a');
    return (
      <StripButton key={i} $active={active} aria-label={name}>
        <Icon name={name} />
        {flags.includes('f') && <Flyout $dark={active} />}
      </StripButton>
    );
  });

const LEFT_TABS = [
  { label: 'Scene View', width: 75, active: true, first: true },
  { label: 'Geometry Spreadsheet', width: 129 },
  { label: 'Render View', width: 88 },
  { label: 'Composite View', width: 102 },
  { label: 'Motion FX View', width: 98 },
  { label: 'Scene Graph Details', width: 119 },
];

const RIGHT_TABS = [
  { label: '/obj/geo1', width: 76, active: true, italic: true },
  { label: '/mat', width: 59, bold: true },
  { label: 'Scene Graph Tree', width: 108 },
  { label: 'Scene Graph Layers Panel', width: 140 },
  { label: 'Python Shell', width: 88 },
  { label: 'Performance Monitor', width: 122 },
];

const renderTabs = (tabs) =>
  tabs.map(({ label, width, active, first, bold, italic }) => (
    <Tab key={label} $width={width} $active={active} $first={first}>
      <TabLabel $bold={bold} $italic={italic}>
        {label}
      </TabLabel>
      <TabClose aria-label={`Close ${label}`}>
        <svg width="5" height="5" viewBox="0 0 5 5">
          <path d="m0.500 0.500 4 4m0-4-4 4" stroke="#c8c8c8" strokeWidth="1.500" />
        </svg>
      </TabClose>
    </Tab>
  ));

const Crumbs = () => (
  <>
    <Crumb>
      <Icon name="obj" />
      obj
    </Crumb>
    <svg width="13" height="20" viewBox="0 0 13 20">
      <path d="M6 0l4 10-4 10" fill="none" stroke="#151515" />
    </svg>
    <Crumb>
      <Icon name="geo" />
      geo1
    </Crumb>
  </>
);

const SHAPES = {
  begin: {
    body: 'M0 10q0-4 4-4L54 14 103 6q4 0 4 4v25q0 3-4 4L54 47 4 39q-4-1-4-4z',
    dots: [[54, 5], [54, 55]],
    fill: '#c06a04',
    mid: 29,
    rows: [[9, 38], [12, 42]],
  },
  wave: {
    body: 'M1 18Q22 9 54 16T106 17V50Q86 59 54 52T1 51z',
    dots: [[21, 5], [43, 6], [64, 10], [86, 12], [53, 60]],
    fill: '#d0d0d0',
    mid: 34,
    rows: [[14, 47], [15, 47]],
  },
  end: {
    body: 'M0 22q0-3 4-4L54 10l49 8q4 1 4 4v26q0 4-4 4L54 43 4 52q-4 0-4-4z',
    dots: [[32, 5], [75, 5], [54, 51]],
    fill: '#c06a04',
    mid: 28,
    rows: [[17, 50], [14, 46]],
  },
  box: {
    body: 'M5 14H102q5 0 5 5V42q0 5-5 5H5q-5 0-5-5V19q0-5 5-5z',
    dots: [[54, 5], [54, 55]],
    fill: '#cdcdcd',
    mid: 30,
    rows: [[15, 46], [15, 46]],
  },
};

const Brick = ({ y }) => (
  <g transform={`translate(54 ${y})`}>
    <path d="m-12-3 7-2v-4q5-3 10 0v4l8 2-1 10-12 4-12-4z" fill="#2f6dca" />
    <path d="m-12-3 7-2q5 3 10 0l8 2-8 5H-5z" fill="#65a3ee" />
    <ellipse cx="0" cy="-8" rx="5" ry="2" fill="#3b7cd9" />
    <path d="m-5 2-7-5v10l7 3z" fill="#1f4f9e" />
  </g>
);

const Duck = () => (
  <g transform="translate(54 34)">
    <circle cx="-3" cy="-6" r="6" fill="#c5b21f" />
    <path d="M-12 4q4-5 10-1 5-6 12-5 6 6 0 11-12 5-21-1z" fill="#c6a90b" />
    <path d="m-2 1 9-1-8 6z" fill="#161204" />
    <circle cx="-5" cy="-6" r="2" fill="#f3eeb8" />
    <path d="M3 7h9v6H8l-5 4 1-4z" fill="#eee" stroke="#888" />
  </g>
);

const Tube = () => (
  <g transform="translate(54 30)" opacity="0.700">
    <path d="m-11-9 4-3 6 5-4 5z" fill="#41627c" />
    <path d="m-7-5 7-5 11 12-9 9z" fill="#8f979c" />
    <path d="M-4-1 3-6" stroke="#cfd6da" />
  </g>
);

const Facets = () => (
  <g transform="translate(54 30)">
    <circle r="13" fill="#e08323" stroke="#222" />
    <path d="M-12.500 2A13 13 0 1 1 12.500 2Q5 6 0 3q-6 3-12.500-1z" fill="#858585" />
    <path d="m-12-1 8-4 4-7 4 7 8 4M-4-5l4 7 4-7zM0 2l-7 2m7-2 7 2" fill="none" stroke="#bbb" />
    <path d="m-4-3 4 5 4-5-4-4z" fill="#f4f4f4" />
  </g>
);

const Diamond = () => (
  <path d="m54 22 13 8-13 8-13-8z" fill="#e8821e" stroke="#8a5a2c" />
);

const glyphs = { brick: Brick, duck: Duck, tube: Tube, facets: Facets, diamond: Diamond };

const NodeLock = ({ dim }) => (
  <LockMark width="24" height="18" viewBox="0 0 24 18" aria-label="locked">
    <path d="M8 8V5q0-3 4-3t4 3v3" fill="none" stroke={dim ? '#4c4c4c' : '#757568'} strokeWidth="2" />
    <path d="M5 8h14v9H5z" fill={dim ? '#4c4c4c' : '#66736a'} />
  </LockMark>
);

const NODES = [
  { x: 1278, y: 50, shape: 'begin', glyph: 'brick', name: 'foreach_count1', note: 'Metadata', top: 14 },
  { x: 960, y: 138, shape: 'begin', glyph: 'brick', kind: 'Block Begin', name: 'foreach_begin1', note: 'Feedback : 5', top: -9 },
  { x: 960, y: 245, shape: 'wave', glyph: 'duck', name: 'attribwrangle1', lock: true, top: 21 },
  { x: 960, y: 363, shape: 'end', glyph: 'brick', kind: 'Block End', name: 'foreach_end1', note: 'Feedback : 6', top: -5 },
  { x: 960, y: 474, shape: 'box', glyph: 'tube', name: 'color1', lock: true, dim: true, top: 17 },
  { x: 1018, y: 597, shape: 'box', glyph: 'facets', name: 'facet1', display: true, top: 17 },
  { x: 1018, y: 696, shape: 'box', glyph: 'diamond', name: 'primitive1', dots: [[32, 5], [75, 5], [53, 55]], top: 18 },
];

const Node = ({ x, y, shape, glyph, kind, name, note, lock, dim, display, dots, top }) => {
  const { body, fill, mid, rows, dots: shapeDots } = SHAPES[shape];
  const Glyph = glyphs[glyph];
  const [[y1, y2], [y3, y4]] = rows;
  return (
    <NodeBox $x={x} $y={y}>
      <NodeArt width="107" height="60" viewBox="0 0 107 60">
        {dim && <rect x="-1" y="13" width="109" height="35" rx="7" fill="#111" stroke="#cf9f9f" strokeWidth="1.500" />}
        <path d={body} fill={dim ? '#3c3c3c' : fill} />
        {dim && <path d="M5 15h11l-4 31H5q-4 0-4-4V19q0-4 4-4z" fill="#ead331" />}
        {display && (
          <path d="M95 14h7q5 0 5 5v23q0 5-5 5H91z" fill="#0aa9f0" stroke="#eee" />
        )}
        <path
          d={`M16 ${y1}L12 ${y2}M31 ${y3}L27 ${y4}M80 ${y3}L76 ${y4}M95 ${y1}L91 ${y2}`}
          stroke={dim ? '#aaa' : '#000'}
          strokeOpacity={fill === '#c06a04' ? 0.6 : 0.45}
        />
        <Glyph y={mid} />
        {(dots || shapeDots).map(([cx, cy]) => (
          <circle key={`${cx} ${cy}`} cx={cx} cy={cy} r="5" fill={dim ? '#575757' : '#b9b9b9'} />
        ))}
      </NodeArt>
      <NodeLabels $top={top}>
        {kind && <NodeKind>{kind}</NodeKind>}
        <NodeName $dim={dim}>{name}</NodeName>
        {note && <NodeNote>{note}</NodeNote>}
        {lock && <NodeLock dim={dim} />}
      </NodeLabels>
    </NodeBox>
  );
};

const VopNode = () => (
  <NodeBox $x={1130} $y={820}>
    <NodeArt width="120" height="60" viewBox="0 0 120 60">
      <circle cx="57" cy="56" r="5" fill="#b9b9b9" />
      <path d="M12 19h101q6 0 5 5l-7 24q-1 4-6 4H12q-6 0-5-5z" fill="#e6e6e6" />
      <path d="M12 16h100q5 0 4 5l-7 23q-1 5-6 5H8q-6 0-5-5z" fill="#4a4a4a" />
      <path d="M12 13h98q5 0 4 5l-8 24q-1 4-6 4H5q-6 0-4-5l7-24q1-4 4-4z" fill="#cdcdcd" />
      <path d="m24 15-9 30M38 15l-9 30M86 15l-9 30M100 15l-9 30" stroke="#777" />
      <path d="M48 18h19v13H48z" fill="#c9c9c9" stroke="#777" />
      <path d="m53 19 4 4 5-4 1 5-5 6-6-6z" fill="#b4593a" />
      <circle cx="51" cy="36" r="6" fill="#a5adb0" stroke="#555" />
      <path d="m51 36 10-7-6 8z" fill="#fff" />
      {[24, 46, 67, 89].map((cx) => (
        <circle key={cx} cx={cx} cy="5" r="5" fill="#b9b9b9" />
      ))}
    </NodeArt>
    <NodeLabels $left={124} $top={17}>
      <NodeName>attribvop1</NodeName>
    </NodeLabels>
  </NodeBox>
);

const MAJOR_FRAMES = [24, 48, 72, 96, 120, 144, 168, 192, 216, 240, 264, 288];
const frameX = (frame) => Math.round((frame - 1) * 6.022) + 1.5;

const Timeline = () => (
  <Ruler aria-label="Timeline">
    <path d="M1 22.500H4000" stroke="#aaa" />
    <path
      d={Array.from({ length: 300 }, (_, i) => `M${frameX(i + 1)} 18v9`).join('')}
      stroke="#828282"
    />
    {MAJOR_FRAMES.map((frame) => (
      <Fragment key={frame}>
        <path d={`M${frameX(frame)} 15v15`} stroke="#b4b4b4" />
        <text x={frameX(frame)} y="10" fontSize="10" fill="#999">
          {frame}
        </text>
      </Fragment>
    ))}
    <path d="M1.500 2.500h24v17H7l-5.500 5z" fill="#0a0a0a" stroke="#f0f0f0" />
    <text x="10" y="16" fontSize="13" fill="#eee">1</text>
  </Ruler>
);

const Grip = () => (
  <svg width="48" height="8" viewBox="0 0 48 8">
    <path d="M0 4h6L3 1zM0 8h6L3 5zM42 4h6l-3-3zM42 8h6l-3-3z" fill="#8c8c8c" />
    <path d="M17 1.500h14M17 4.500h14M17 7.500h14" stroke="#8c8c8c" strokeDasharray="1 2" />
  </svg>
);

const CameraDropdown = ({ label, value }) => (
  <CameraMenu>
    <CameraSelect aria-label={label}>
      <option>{value}</option>
    </CameraSelect>
    <svg width="7" height="4" viewBox="0 0 7 4">
      <path d="M0 0h7L3.500 4z" fill="#ccc" />
    </svg>
  </CameraMenu>
);

const SceneViewPane = () => (
  <Pane>
    <TabBar>
      {renderTabs(LEFT_TABS)}
      <TabAdd aria-label="Add tab">
        <Icon name="plus" size={14} />
      </TabAdd>
      <TabTools>
        <svg width="24" height="12" viewBox="0 0 24 12">
          <path d="M0 1h8v7H0z" fill="#ddd" />
          <path d="M16 2h6l-3 5z" fill="#ddd" />
        </svg>
      </TabTools>
    </TabBar>
    <PathBar $right={1}>
      <NavArrows $width={43}>
        <Icon name="back" />
        <Icon name="forward" size={18} />
      </NavArrows>
      <PathField>
        <Crumbs />
        <PathMenu aria-label="Path history">
          <Icon name="caret" size={14} />
        </PathMenu>
      </PathField>
      <PathTools>
        <IconButton aria-label="Pin"><Icon name="one" size={21} /></IconButton>
        <IconButton aria-label="Link"><Icon name="target" /></IconButton>
        <IconButton $width={33} aria-label="Display"><Icon name="cube" /></IconButton>
        <IconButton $width={18} aria-label="Shading"><Icon name="sphere" /></IconButton>
        <IconButton $width={18} aria-label="Background"><Icon name="square" /></IconButton>
      </PathTools>
    </PathBar>
    <ViewBar>
      <Icon name="camera" size={20} />
      <ViewTitle>View</ViewTitle>
      <ViewTools $gap={9}>
        <IconButton aria-label="Pose"><Icon name="pose" /></IconButton>
        <IconButton aria-label="Select"><Icon name="select" /></IconButton>
        <IconButton aria-label="Brush"><Icon name="brush" /></IconButton>
        <ViewTools>
          <IconButton $active $width={18} aria-label="Rocks"><Icon name="rocks" /></IconButton>
          <IconButton $width={26} aria-label="Zoom box"><Icon name="zoomBox" size={14} /></IconButton>
        </ViewTools>
        <IconButton $width={20} aria-label="Blocked"><Icon name="blocked" /></IconButton>
      </ViewTools>
      <ViewSpacer />
      <IconButton aria-label="Graph"><Icon name="graph" /></IconButton>
      <IconButton aria-label="Help"><Icon name="help" size={18} /></IconButton>
    </ViewBar>
    <Stage>
      <ToolStrip $width={19} $align="flex-end">
        <StripHandle $height={7} $after={4} />
        {renderTools(LEFT_TOOLS)}
        <Meter />
      </ToolStrip>
      <Viewport>
        <MeshView />
        <CameraMenus>
          <CameraDropdown label="View direction" value="Bottom" />
          <CameraDropdown label="Camera" value="No cam" />
        </CameraMenus>
        <HelpText>
          Left mouse tumbles. Middle pans. Right dollies. Ctrl+Alt+Left box-zooms. Ctrl+Right
          zooms. Spacebar-Ctrl-Left tilts. Hold L for alternate tumble, dolly, and zoom.
        </HelpText>
      </Viewport>
      <ToolStrip $width={24}>
        <StripHandle $height={7} $after={0} />
        {renderTools(RIGHT_TOOLS)}
      </ToolStrip>
    </Stage>
    <RowSplitter $height={10}>
      <Grip />
    </RowSplitter>
  </Pane>
);

const NetworkPane = () => (
  <Pane>
    <TabBar>{renderTabs(RIGHT_TABS)}</TabBar>
    <PathBar $right={0}>
      <NavArrows $width={50} $indent={6}>
        <Icon name="back" />
        <Icon name="forward" size={18} />
      </NavArrows>
      <PathField>
        <Crumbs />
      </PathField>
    </PathBar>
    <MenuBar>
      {['Add', 'Edit', 'Go', 'View', 'Tools', 'Layout', 'Help'].map((item) => (
        <MenuItem key={item}>{item}</MenuItem>
      ))}
    </MenuBar>
    <Network>
      <Wires width="591" height="809" viewBox="887 66 591 809">
        <path
          d="M1190 60 956 125q-11 5-11 14V418q0 12 12 12H1074q9 0 16-8L1392 124q8-6 8-16V60z"
          fill="#4d3a26"
          stroke="#b8741c"
        />
        <circle cx="1071.500" cy="627" r="53" fill="#446a9c" />
        <circle cx="1071.500" cy="627" r="36" fill="#9173cb" />
        <g fill="none" stroke="#6089bd">
          <path d="M1019 66 1015 138M1014 197 981 246M1013 308 993 364M1014 418V476" />
          <path d="M1014 532q1 8 10 16l36 32q7 6 9 11M1067 663 1051 697" />
          <path d="M1072 756q1 15 14 22l55 24q12 7 14 20" />
        </g>
      </Wires>
      {NODES.map((node) => (
        <Node key={node.name} {...node} />
      ))}
      <VopNode />
      <Watermark>Geometry</Watermark>
      <ParmPanel>
        <ParmHeader>
          <Icon name="tube" />
          Color
          <ParmInput defaultValue="color1" />
        </ParmHeader>
      </ParmPanel>
    </Network>
    <RowSplitter $height={5} $end={54}>
      <Grip />
    </RowSplitter>
  </Pane>
);

const App = () => (
  <>
    <GlobalStyle />
    <Desktop>
      <Panes>
        <SceneViewPane />
        <ColumnSplitter>
          <svg width="3" height="50" viewBox="0 0 3 50">
            <path d="M0.500 16v20M2.500 16v20" stroke="#888" strokeDasharray="1 2" />
          </svg>
        </ColumnSplitter>
        <NetworkPane />
      </Panes>
      <Playbar>
        <Transport $after={4}>
          <PlayButton aria-label="First frame"><Icon name="toStart" size={19} /></PlayButton>
          <PlayButton aria-label="Play backward"><Icon name="playBack" /></PlayButton>
          <PlayButton $active aria-label="Stop"><Icon name="stop" /></PlayButton>
          <PlayButton aria-label="Play"><Icon name="play" /></PlayButton>
          <PlayButton aria-label="Last frame"><Icon name="toEnd" size={19} /></PlayButton>
        </Transport>
        <FrameInput aria-label="Current frame" defaultValue="1" />
        <Transport $after={2}>
          <PlayButton $small aria-label="Previous frame"><Icon name="stepBack" /></PlayButton>
          <PlayButton $small aria-label="Next frame"><Icon name="stepNext" /></PlayButton>
        </Transport>
        <Timeline />
      </Playbar>
    </Desktop>
  </>
);

export default App;
